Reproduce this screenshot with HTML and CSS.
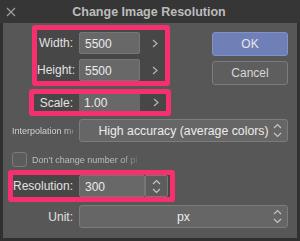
FILE: index.html
```html
<!DOCTYPE html>
<html lang="en">
<head>
    <meta charset="UTF-8">
    <meta name="viewport" content="width=device-width, initial-scale=1.0">
    <title>Change Image Resolution</title>
    <link rel="stylesheet" href="styles.css">
</head>
<body>
    <div class="window">
        <div class="titlebar">
            <svg class="close" width="10" height="10" viewBox="0 0 10 10"><path d="M1 1L9 9M9 1L1 9" stroke="#9a9a9a" stroke-width="1.4" fill="none"/></svg>
            <span class="title">Change Image Resolution</span>
        </div>
        <div class="body">
            <div class="top">
                <div class="mark mark-size">
                    <div class="field-row">
                        <label class="lbl lbl-size">Width:</label>
                        <div class="input w61">5500</div>
                        <div class="chev chev-size"><svg width="6" height="9" viewBox="0 0 6 9"><path d="M1 1L5 4.5L1 8" stroke="#b5b5b5" stroke-width="1.2" fill="none"/></svg></div>
                    </div>
                    <div class="field-row row2">
                        <label class="lbl lbl-size">Height:</label>
                        <div class="input w61">5500</div>
                        <div class="chev chev-size"><svg width="6" height="9" viewBox="0 0 6 9"><path d="M1 1L5 4.5L1 8" stroke="#b5b5b5" stroke-width="1.2" fill="none"/></svg></div>
                    </div>
                </div>
                <div class="buttons">
                    <button class="btn ok">OK</button>
                    <button class="btn cancel">Cancel</button>
                </div>
            </div>

            <div class="mark mark-scale">
                <div class="field-row">
                    <label class="lbl lbl-scale">Scale:</label>
                    <div class="input w61 flat">1.00</div>
                    <div class="chev chev-scale"><svg width="6" height="9" viewBox="0 0 6 9"><path d="M1 1L5 4.5L1 8" stroke="#b5b5b5" stroke-width="1.2" fill="none"/></svg></div>
                </div>
            </div>

            <div class="row interp">
                <label class="lbl small">Interpolation me</label>
                <div class="select">
                    <span>High accuracy (average colors)</span>
                    <svg class="updown" width="9" height="15" viewBox="0 0 9 15"><path d="M1 5L4.5 1.5L8 5M1 10L4.5 13.5L8 10" stroke="#c4c4c4" stroke-width="1.2" fill="none"/></svg>
                </div>
            </div>

            <div class="check-row">
                <span class="box"></span>
                <span class="check-text">Don't change number of pi</span>
            </div>

            <div class="mark mark-res">
                <div class="field-row">
                    <label class="lbl lbl-res">Resolution:</label>
                    <div class="input w66">300</div>
                    <div class="spin"><svg width="9" height="15" viewBox="0 0 9 15"><path d="M1 5L4.5 1.5L8 5M1 10L4.5 13.5L8 10" stroke="#c4c4c4" stroke-width="1.2" fill="none"/></svg></div>
                </div>
            </div>

            <div class="row unit">
                <label class="lbl">Unit:</label>
                <div class="select">
                    <span>px</span>
                    <svg class="updown" width="9" height="15" viewBox="0 0 9 15"><path d="M1 5L4.5 1.5L8 5M1 10L4.5 13.5L8 10" stroke="#c4c4c4" stroke-width="1.2" fill="none"/></svg>
                </div>
            </div>
        </div>
    </div>
</body>
</html>
```

FILE: styles.css
```css
* { box-sizing: border-box; }
body { margin: 0; background: #2e2e2e; font-family: "Liberation Sans", Arial, sans-serif; color: #e4e4e4; }
.window { width: 300px; height: 241px; background: #303030; overflow: hidden; }

.titlebar { height: 23px; display: flex; align-items: center; justify-content: center; position: relative; background: #363636; }
.close { position: absolute; left: 6px; top: 7px; }
.title { font-size: 12.5px; font-weight: bold; color: #bcbcbc; margin-left: -2px; }

.body { margin: 0 3px; height: 215px; background: #575757; padding-bottom: 10px; }

.top { display: flex; justify-content: space-between; }
.buttons { display: flex; flex-direction: column; gap: 5px; padding-top: 9px; padding-right: 9px; }
.btn { width: 76px; height: 24px; border-radius: 3px; font-family: inherit; font-size: 12px; color: #e8e8e8; padding: 0; }
.ok { background: #6f7fb7; border: 1px solid #8391c6; }
.cancel { background: #5e5e5e; border: 1px solid #7c7c7c; color: #d8d8d8; }

.mark { border: 5px solid #f6306f; border-radius: 3px; background: #474747; }
.mark-size { margin: 2px 0 0 29px; width: 138px; height: 61px; padding-top: 2px; }
.mark-scale { margin: 3px 0 0 26px; width: 142px; height: 27px; }
.mark-res { margin: 3px 0 0 5px; width: 167px; height: 32px; }

.field-row { display: flex; align-items: center; }
.row2 { margin-top: 5px; }
.lbl { text-align: right; font-size: 12px; color: #e2e2e2; padding-right: 6px; white-space: nowrap; }
.lbl-size { width: 42px; }
.lbl-scale { width: 45px; }
.lbl-res { width: 66px; }

.input { height: 22px; background: #686868; border: 1px solid #767676; border-radius: 2px; font-size: 12px; padding: 4px 0 0 5px; color: #ececec; }
.input.flat { height: 17px; border: none; border-radius: 0; padding-top: 2px; }
.w61 { width: 61px; }
.w66 { width: 66px; }
.chev { display: flex; align-items: center; justify-content: center; height: 22px; }
.chev-size { width: 25px; padding-left: 4px; }
.chev-scale { width: 26px; padding-left: 6px; height: 17px; }
.spin { width: 23px; height: 22px; display: flex; align-items: center; justify-content: center; background: #5c5c5c; border: 1px solid #777; border-radius: 0 2px 2px 0; }

.row { display: flex; align-items: center; margin-top: 3px; padding-right: 9px; }
.row .lbl { width: 76px; }
.interp .lbl.small { width: 70px; margin-right: 6px; padding: 0 0 0 9px; font-size: 9px; text-align: left; color: #d0d0d0; -webkit-mask-image: linear-gradient(to right, #000 88%, rgba(0,0,0,0.4)); }
.select { flex: 1; height: 23px; background: #666; border: 1px solid #7c7c7c; border-radius: 3px; display: flex; align-items: center; justify-content: center; position: relative; font-size: 12.3px; color: #ececec; }
.updown { position: absolute; right: 5px; top: 3px; }

.check-row { display: flex; align-items: center; margin: 10px 0 0 9px; height: 15px; }
.box { width: 15px; height: 15px; border: 1px solid #7a7a7a; border-radius: 3px; background: #5c5c5c; }
.check-text { margin-left: 5px; font-size: 9px; color: #bdbdbd; white-space: nowrap; -webkit-mask-image: linear-gradient(to right, #000 85%, rgba(0,0,0,0.3)); }
```
